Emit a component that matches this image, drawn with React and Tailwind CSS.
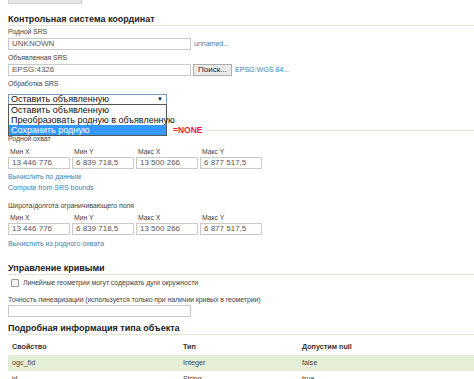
import React from "react";

const font = { fontFamily: '"Liberation Sans", Arial, sans-serif' };

const Label = ({ children, className = "" }) => (
  <div className={`h-[8px] text-[7px] leading-[8px] tracking-[-0.1px] text-[#444] whitespace-nowrap ${className}`}>{children}</div>
);

const Input = ({ value, className = "" }) => (
  <div
    className={`h-[12px] border border-[#c9c9c9] bg-white text-[8px] leading-[10px] text-[#555] pl-[3px] overflow-hidden whitespace-nowrap ${className}`}
  >
    {value}
  </div>
);

const Link = ({ children, className = "" }) => (
  <div className={`h-[10px] text-[7.2px] leading-[10px] tracking-[-0.1px] text-[#3b86b2] whitespace-nowrap ${className}`}>{children}</div>
);

const Header = ({ children, className = "" }) => (
  <div className={`h-[13px] border-b border-[#e2e6d2] text-[9px] leading-[12px] font-bold text-[#222] ${className}`}>
    {children}
  </div>
);

const BBox = () => {
  const cols = [
    ["Мин X", "13 446 776"],
    ["Мин Y", "6 839 718,5"],
    ["Макс X", "13 500 266"],
    ["Макс Y", "6 877 517,5"],
  ];
  return (
    <div className="flex gap-[2px]">
      {cols.map(([l, v]) => (
        <div key={l} className="w-[62px]">
          <div className="h-[10px] pl-[2px] text-[6.8px] leading-[10px] text-[#444]">{l}</div>
          <Input value={v} />
        </div>
      ))}
    </div>
  );
};

const rows = [
  ["ogc_fid", "Integer", "false"],
  ["id", "String", "true"],
];

export default function App() {
  return (
    <div style={font} className="w-[474px] h-[379px] overflow-hidden bg-white pl-[8px]">
      {/* кнопка сверху */}
      <div className="w-[74px] h-[4px] bg-[#e6e6e6] border-b border-x border-[#cfcfcf]" />

      <Header className="mt-[9px]">Контрольная система координат</Header>

      <Label className="mt-[2px]">Родной SRS</Label>
      <div className="flex items-center mt-[2px] h-[12px]">
        <Input value="UNKNOWN" className="w-[183px]" />
        <Link className="ml-[3px]">unnamed...</Link>
      </div>

      <Label className="mt-[4px]">Объявленная SRS</Label>
      <div className="flex items-center mt-[2px] h-[12px]">
        <Input value="EPSG:4326" className="w-[183px]" />
        <div className="ml-[2px] w-[39px] h-[12px] border border-[#adadad] bg-[#ebebeb] text-[8px] leading-[10px] text-center text-[#222]">
          Поиск...
        </div>
        <Link className="ml-[3px]">EPSG:WGS 84...</Link>
      </div>

      <Label className="mt-[4px]">Обработка SRS</Label>
      <div className="relative mt-[6px] w-[159px]">
        <div className="h-[11px] border border-[#7f9db9] bg-white flex items-center justify-between pl-[2px] pr-[3px] text-[9px] leading-[9px] text-[#111] whitespace-nowrap">
          <span>Оставить объявленную</span>
          <span className="text-[6px]">▼</span>
        </div>
        <div className="absolute left-0 top-[10px] w-[159px] bg-white border border-[#555] text-[9px] leading-[10px] text-[#111] z-10 whitespace-nowrap">
          <div className="pl-[2px] h-[10px]">Оставить объявленную</div>
          <div className="pl-[2px] h-[10px]">Преобразовать родную в объявленную</div>
          <div className="pl-[2px] h-[10px] bg-[#3399ff] text-white">Сохранить родную</div>
        </div>
      </div>

      <div className="flex items-center mt-[20px] h-[10px] pl-[165px]">
        <span className="text-[8.5px] leading-[10px] font-bold text-[#e8262c]">=NONE</span>
        <div className="flex-1 ml-[4px] border-t border-[#e2e6d2]" />
      </div>

      <Label>Родной охват</Label>
      <div className="mt-[4px]">
        <BBox />
      </div>
      <Link className="mt-[3px]">Вычислить по данным</Link>
      <Link className="mt-[1px]">Compute from SRS bounds</Link>

      <Label className="mt-[9px]">Широта/долгота ограничивающего поля</Label>
      <div className="mt-[3px]">
        <BBox />
      </div>
      <Link className="mt-[4px]">Вычислить из родного охвата</Link>

      <Header className="mt-[13px]">Управление кривыми</Header>
      <div className="flex items-center mt-[2px] h-[12px]">
        <div className="ml-[3px] w-[8px] h-[8px] border border-[#9a9a9a] bg-[#f3f3f3] rounded-[1px]" />
        <span className="ml-[4px] text-[7px] tracking-[-0.1px] text-[#444]">
          Линейные геометрии могут содержать дуги окружности
        </span>
      </div>
      <Label className="mt-[7px]">
        Точность линеаризации (используется только при наличии кривых в геометрии)
      </Label>
      <Input value="" className="w-[183px] mt-[1px]" />

      <Header className="mt-[5px]">Подробная информация типа объекта</Header>
      <div className="mt-[4px] text-[7.2px] text-[#444]">
        <div className="flex h-[16px] items-center font-bold text-[#333]">
          <div className="w-[171px] pl-[4px]">Свойство</div>
          <div className="w-[119px] pl-[4px]">Тип</div>
          <div className="pl-[4px]">Допустим null</div>
        </div>
        {rows.map((r, i) => (
          <div
            key={r[0]}
            className={`flex h-[16px] items-center ${i % 2 === 0 ? "bg-[#e5eed6]" : ""}`}
          >
            <div className="w-[171px] pl-[4px]">{r[0]}</div>
            <div className="w-[119px] pl-[4px]">{r[1]}</div>
            <div className="pl-[4px]">{r[2]}</div>
          </div>
        ))}
      </div>
    </div>
  );
}
